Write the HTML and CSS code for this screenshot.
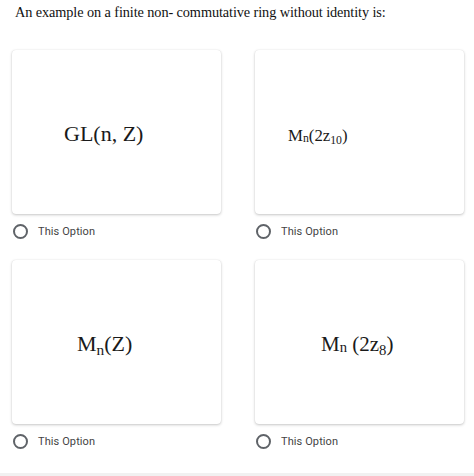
FILE: index.html
```html
<!DOCTYPE html>
<html>
<head>
<meta charset="utf-8">
<link rel="stylesheet" href="styles.css">
</head>
<body>
<div class="page">
  <p class="question">An example on a finite non- commutative ring without identity is:</p>
  <div class="options">
    <div class="option">
      <div class="card card-a"><span class="math big">GL(n, Z)</span></div>
      <label class="choice"><span class="radio"></span><span class="label">This Option</span></label>
    </div>
    <div class="option">
      <div class="card card-b"><span class="math small">M<sub class="sub-n">n</sub>(2z<sub>10</sub>)</span></div>
      <label class="choice"><span class="radio"></span><span class="label">This Option</span></label>
    </div>
    <div class="option">
      <div class="card card-c"><span class="math big">M<sub>n</sub>(Z)</span></div>
      <label class="choice"><span class="radio"></span><span class="label">This Option</span></label>
    </div>
    <div class="option">
      <div class="card card-d"><span class="math mid">M<sub class="sub-n">n</sub> (2z<sub>8</sub>)</span></div>
      <label class="choice"><span class="radio"></span><span class="label">This Option</span></label>
    </div>
  </div>
</div>
<div class="footer-band"></div>
</body>
</html>
```
FILE: styles.css
```css
html, body {
  margin: 0;
  padding: 0;
  background: #ffffff;
}
body {
  width: 474px;
  height: 476px;
  overflow: hidden;
  display: flex;
  flex-direction: column;
}
.page {
  flex: 1;
  padding: 0 10px 0 12px;
}
.question {
  margin: 0;
  padding: 4px 0 0 3px;
  height: 50px;
  box-sizing: border-box;
  font-family: "Liberation Serif", "Times New Roman", serif;
  font-size: 14.3px;
  line-height: 17px;
  color: #111;
  letter-spacing: -0.1px;
}
.options {
  display: grid;
  grid-template-columns: 209px 209px;
  column-gap: 34px;
  row-gap: 11px;
}
.option {
  display: flex;
  flex-direction: column;
}
.card {
  height: 164px;
  box-sizing: border-box;
  background: #fff;
  border-radius: 4px;
  box-shadow: 0 1px 3px rgba(0,0,0,0.22), 0 0 1px rgba(0,0,0,0.12);
  display: flex;
  align-items: center;
}
.card-a { padding-left: 52px; padding-top: 4px; }
.card-b { padding-left: 33px; padding-top: 8px; }
.card-c { padding-left: 65px; padding-top: 4px; }
.card-d { padding-left: 66px; padding-top: 4px; }
.math {
  font-family: "Liberation Serif", "Times New Roman", serif;
  color: #1a1a1a;
  white-space: nowrap;
}
.math.big { font-size: 22px; }
.math.mid { font-size: 21px; }
.math.small { font-size: 16.8px; }
.math sub {
  font-size: 0.7em;
  vertical-align: -0.25em;
  line-height: 0;
}
.math sub.sub-n {
  vertical-align: -0.1em;
}
.choice {
  height: 35px;
  display: flex;
  align-items: center;
  padding-left: 1px;
}
.radio {
  width: 15px;
  height: 15px;
  box-sizing: border-box;
  border: 2px solid #5f6368;
  border-radius: 50%;
  margin-right: 10px;
  flex: none;
}
.label {
  font-family: Roboto, "Noto Sans", sans-serif;
  font-size: 11px;
  color: #444;
  letter-spacing: 0.1px;
}
.footer-band {
  height: 3px;
  background: #f1f1f1;
  flex: none;
}
```
